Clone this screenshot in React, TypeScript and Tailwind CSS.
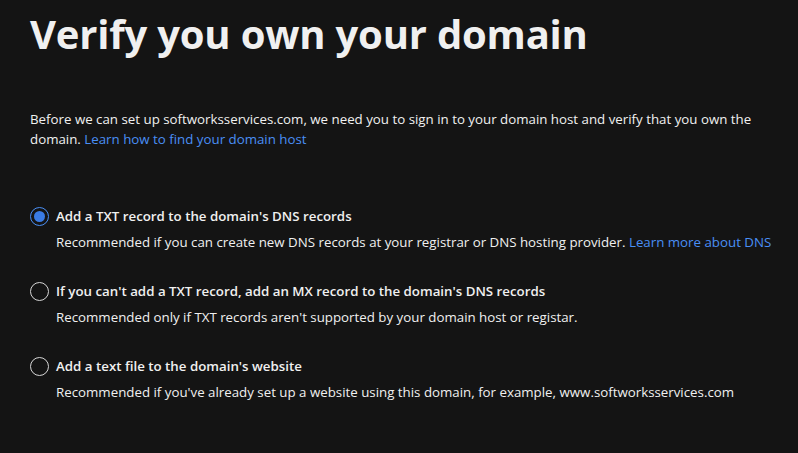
import { useState } from "react";

const options = [
  {
    id: "txt",
    title: "Add a TXT record to the domain's DNS records",
    desc: "Recommended if you can create new DNS records at your registrar or DNS hosting provider.",
    link: "Learn more about DNS",
  },
  {
    id: "mx",
    title: "If you can't add a TXT record, add an MX record to the domain's DNS records",
    desc: "Recommended only if TXT records aren't supported by your domain host or registar.",
  },
  {
    id: "file",
    title: "Add a text file to the domain's website",
    desc: "Recommended if you've already set up a website using this domain, for example, www.softworksservices.com",
  },
];

export default function App() {
  const [selected, setSelected] = useState("txt");

  return (
    <div
      className="h-[453px] w-full overflow-hidden bg-[#141414] text-[#f0f0f0]"
      style={{ fontFamily: '"Open Sans", "Noto Sans", sans-serif' }}
    >
      <div className="pl-[30px] pr-4">
        <h1 className="pt-[4px] text-[40px] font-bold leading-[60px] tracking-[-0.2px]">
          Verify you own your domain
        </h1>

        <p className="mt-[45px] text-[13.3px] leading-[20px]">
          Before we can set up softworksservices.com, we need you to sign in to your domain host and verify that you own the
          domain.{" "}
          <a className="text-[#4a8ff5]" href="#">
            Learn how to find your domain host
          </a>
        </p>

        <div className="mt-[57px] flex flex-col gap-[29px]">
          {options.map((o) => (
            <div key={o.id} className="flex flex-col">
              <label
                className="flex cursor-pointer items-center gap-[7px]"
                onClick={() => setSelected(o.id)}
              >
                <span
                  className={
                    selected === o.id
                      ? "flex h-[19px] w-[19px] items-center justify-center rounded-full border border-[#4a8ff5]"
                      : "flex h-[19px] w-[19px] items-center justify-center rounded-full border border-[#d6d6d6]"
                  }
                >
                  {selected === o.id && (
                    <span className="h-[11px] w-[11px] rounded-full bg-[#3a7be4]" />
                  )}
                </span>
                <span className="text-[13.3px] font-semibold leading-[20px]">{o.title}</span>
              </label>
              <p className="mt-[6px] pl-[26px] text-[13.3px] leading-[20px]">
                {o.desc}
                {o.link && (
                  <>
                    {" "}
                    <a className="text-[#4a8ff5]" href="#">
                      {o.link}
                    </a>
                  </>
                )}
              </p>
            </div>
          ))}
        </div>
      </div>
    </div>
  );
}
